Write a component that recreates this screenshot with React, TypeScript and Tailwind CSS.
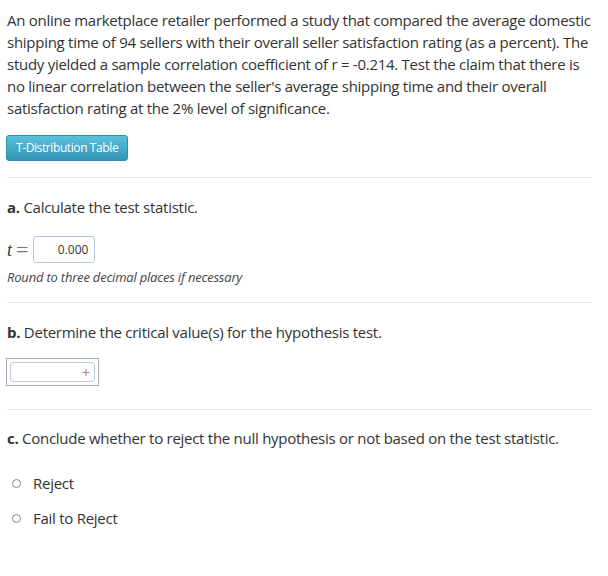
export default function App() {
  return (
    <div className="bg-white px-[7px] pt-[9px] text-[15px] leading-[22px] text-[#333] w-[598px] tracking-[-0.27px]" style={{ fontFamily: '"Open Sans", sans-serif' }}>
      <p>
        An online marketplace retailer performed a study that compared the average domestic shipping time of 94 sellers with
        their overall seller satisfaction rating (as a percent). The study yielded a sample correlation coefficient of r = -0.214.
        Test the claim that there is no linear correlation between the seller's average shipping time and their overall
        satisfaction rating at the 2% level of significance.
      </p>

      <button className="mt-[16px] ml-[-1px] h-[26px] px-[9px] rounded-[3px] border border-[#2f8cab] bg-gradient-to-b from-[#5bc0de] to-[#2f96b4] text-white text-[12px] leading-[24px] tracking-[-0.4px]">
        T-Distribution Table
      </button>

      <div className="mt-[16px] border-t border-[#e5e5e5]" />

      <p className="mt-[18px]">
        <b>a.</b> Calculate the test statistic.
      </p>
      <div className="mt-[18px] flex items-center">
        <span className="italic text-[18px] tracking-normal" style={{ fontFamily: '"Liberation Serif", serif' }}>t</span>
        <span className="ml-[4px] text-[22px] leading-none text-[#777] tracking-normal" style={{ fontFamily: '"Liberation Serif", serif' }}>=</span>
        <div className="ml-[5px] w-[62px] h-[27px] rounded-[3px] border border-[#b9c7dc] flex items-center justify-end pr-[6px] text-[12px] text-[#333] tracking-normal">
          0.000
        </div>
      </div>
      <p className="mt-[3px] text-[13px] italic text-[#444] tracking-[-0.2px]">Round to three decimal places if necessary</p>

      <div className="mt-[14px] border-t border-[#e5e5e5]" />

      <p className="mt-[18px]">
        <b>b.</b> Determine the critical value(s) for the hypothesis test.
      </p>
      <div className="mt-[15px] ml-[-1px] w-[93px] h-[28px] border border-[#aaa] p-[3px]">
        <div className="h-full rounded-[3px] border border-[#bccbe0] flex items-center justify-end pr-[4px] text-[15px] leading-none text-[#a88a6a]">
          +
        </div>
      </div>

      <div className="mt-[23px] border-t border-[#e5e5e5]" />

      <p className="mt-[17px]">
        <b>c.</b> Conclude whether to reject the null hypothesis or not based on the test statistic.
      </p>
      <div className="mt-[23px] flex flex-col gap-[13px] pl-[5px]">
        {['Reject', 'Fail to Reject'].map((label) => (
          <label key={label} className="flex items-center gap-[12px]">
            <span className="w-[9px] h-[9px] rounded-full border border-[#888]" />
            <span>{label}</span>
          </label>
        ))}
      </div>
      <div className="h-[40px]" />
    </div>
  );
}
